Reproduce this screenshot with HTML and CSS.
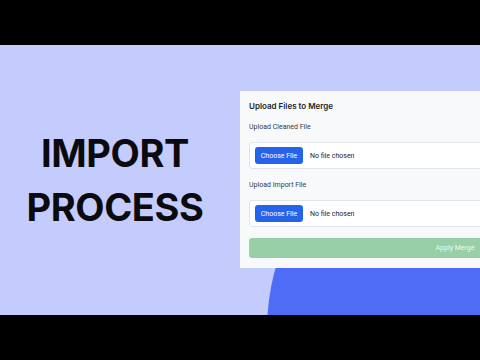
FILE: index.html
```html
<!DOCTYPE html>
<html lang="en">
  <head>
    <meta charset="UTF-8" />
    <meta name="viewport" content="width=device-width, initial-scale=1.0" />
    <title>Import Process</title>
    <link rel="stylesheet" href="styles.css">
  </head>
  <body>
    <div class="frame">
      <div class="letterbox"></div>

      <div class="stage">
        <div class="blob"></div>

        <div class="headline">
          <h1>IMPORT<br />PROCESS</h1>
        </div>

        <div class="upload-card">
          <h2 class="card-title">Upload Files to Merge</h2>

          <div class="field">
            <p class="field-label">Upload Cleaned File</p>
            <div class="file-box">
              <span class="file-btn">Choose File</span>
              <span class="file-name">No file chosen</span>
            </div>
          </div>

          <div class="field">
            <p class="field-label">Upload Import File</p>
            <div class="file-box">
              <span class="file-btn">Choose File</span>
              <span class="file-name">No file chosen</span>
            </div>
          </div>

          <button class="apply-btn" disabled>Apply Merge</button>
        </div>
      </div>

      <div class="letterbox"></div>
    </div>
  </body>
</html>
```

FILE: styles.css
```css
body {
  margin: 0;
  background: #000;
  font-family: Inter, "Noto Sans", sans-serif;
}

.frame {
  width: 480px;
  height: 360px;
  display: flex;
  flex-direction: column;
  overflow: hidden;
}

.letterbox {
  height: 45px;
  background: #000;
  flex-shrink: 0;
}

.stage {
  position: relative;
  height: 270px;
  background: #c4ccfd;
  display: flex;
  overflow: hidden;
}

/* big blue circle peeking out under the card */
.blob {
  position: absolute;
  left: 267px;
  top: 55px;
  width: 460px;
  height: 460px;
  border-radius: 50%;
  background: #4e6cf6;
}

.headline {
  width: 230px;
  flex-shrink: 0;
  display: flex;
  align-items: center;
  justify-content: center;
}

.headline h1 {
  margin: 0;
  font-size: 38px;
  font-weight: 700;
  line-height: 54px;
  text-align: center;
  color: #0b0b0f;
  letter-spacing: -0.4px;
}

.upload-card {
  position: relative;
  flex-shrink: 0;
  width: 412px;
  margin: 46px 0 0 10px;
  align-self: flex-start;
  padding: 9px 9px 10px;
  background: #f8f9fb;
  color: #212529;
  font-family: Roboto, "Liberation Sans", sans-serif;
}

.card-title {
  margin: 0 0 10px;
  font-family: Inter, sans-serif;
  font-size: 8px;
  line-height: 12px;
  font-weight: 600;
}

.field {
  margin-bottom: 11px;
}

.field-label {
  margin: 0 0 10px;
  font-size: 7px;
  line-height: 10px;
  color: #343a40;
}

.file-box {
  height: 25px;
  display: flex;
  align-items: center;
  gap: 7px;
  padding: 0 5px;
  background: #fff;
  border: 1px solid #e1e4e8;
  border-radius: 3px;
}

.file-btn {
  width: 48px;
  height: 17px;
  display: flex;
  align-items: center;
  justify-content: center;
  background: #2563eb;
  color: #fff;
  font-size: 7px;
  border-radius: 3px;
}

.file-name {
  font-size: 7px;
  color: #212529;
}

.apply-btn {
  display: block;
  width: 100%;
  height: 20px;
  padding: 0;
  border: 0;
  border-radius: 3px;
  background: #98cfa6;
  color: #eef8f0;
  font-family: inherit;
  font-size: 7px;
}
```
